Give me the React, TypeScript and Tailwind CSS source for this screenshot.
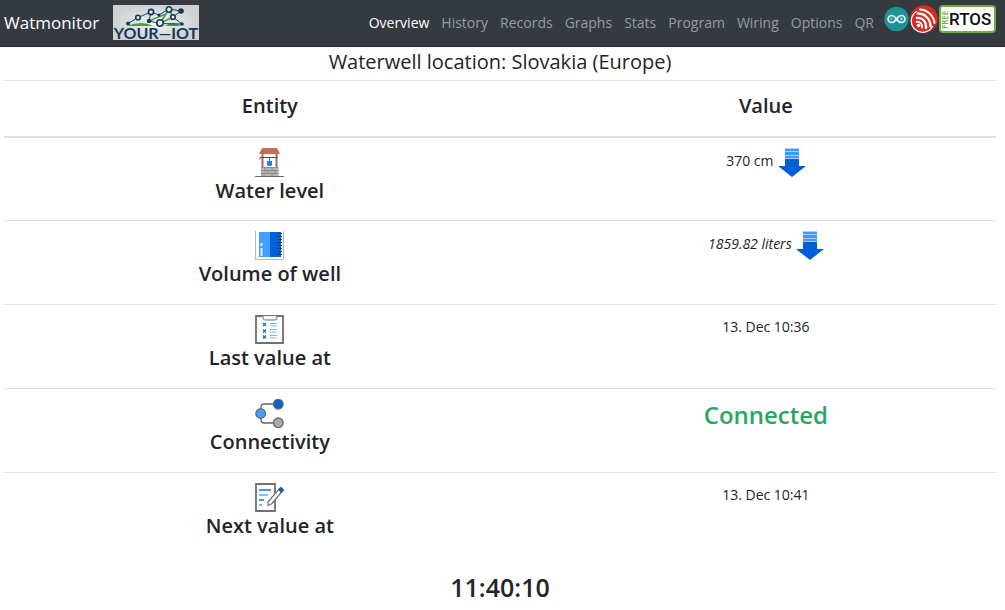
import type { ReactNode } from "react";

const links = ["Overview", "History", "Records", "Graphs", "Stats", "Program", "Wiring", "Options", "QR"];

function YourIotLogo() {
  return (
    <svg width="86" height="35" viewBox="0 0 86 35" className="block overflow-visible" role="img" aria-label="Your-IoT">
      <defs>
        <radialGradient id="plate">
          <stop offset="0" stopColor="#f4f4f4" />
          <stop offset="1" stopColor="#cfd0d2" />
        </radialGradient>
      </defs>
      <rect width="86" height="35" fill="url(#plate)" />
      <path d="M14 21 Q29 15 40 21Z M52 21 Q60 15 68 21Z" fill="#4f9b45" />
      <path d="M15 18.500 25 12.500 38 7 36 16 47 18.500 69 19 60 12 56 4 68 6 60 12 M38 7 46 10 56 4" fill="none" stroke="#174568" strokeWidth="1" />
      <path d="M36 16 53 9 56 4M47 18.500 60 12 56 4Z" fill="none" stroke="#4f9b45" strokeWidth="1.5" />
      <g fill="#12395c">
        <circle cx="15" cy="18.5" r="2" />
        <circle cx="36" cy="16" r="2.2" />
        <circle cx="46" cy="10" r="1.6" />
        <circle cx="68" cy="6" r="2.8" />
        <circle cx="69" cy="19" r="1.8" />
      </g>
      <g fill="#eef1f3" stroke="#12395c" strokeWidth="1.6">
        <circle cx="25" cy="12.5" r="2.3" />
        <circle cx="38" cy="7" r="2.6" />
        <circle cx="47" cy="18" r="3.2" />
        <circle cx="56" cy="4.5" r="2.7" />
        <circle cx="60" cy="12" r="2.3" />
      </g>
      <text x="43" y="34" textAnchor="middle" fontFamily="Lato, sans-serif" fontWeight="700" fontSize="16" fill="#12395c">YOUR—IOT</text>
    </svg>
  );
}

function ArduinoLogo() {
  return (
    <svg width="25" height="26" viewBox="0 0 25 26" className="block" role="img" aria-label="Arduino">
      <circle cx="12.5" cy="13" r="12.2" fill="#1b9298" />
      <path d="M12.5 13C10.8 10.4 9.5 9.5 7.6 9.5a3.5 3.5 0 0 0 0 7c1.9 0 3.2-.9 4.9-3.5 1.7-2.6 3-3.5 4.9-3.5a3.5 3.5 0 0 1 0 7c-1.9 0-3.2-.9-4.9-3.5Z" fill="none" stroke="#e9f7f7" strokeWidth="1.7" />
      <path d="M6.2 13h2.8M16 13h2.8M17.4 11.6v2.8" stroke="#e9f7f7" strokeWidth=".8" />
    </svg>
  );
}

function EspressifLogo() {
  return (
    <svg width="28" height="28" viewBox="0 0 28 28" className="block" role="img" aria-label="Espressif">
      <circle cx="14" cy="14" r="13.8" fill="#d32c20" />
      <g fill="none" stroke="#fff" strokeLinecap="round">
        <path d="M6.5 6.5A11.3 11.3 0 1 0 22.5 21.5" strokeWidth="1.2" />
        <path d="M10 4.5C17 4.5 24 11 24.5 18" strokeWidth="2" />
        <path d="M8 8.5C15 8.5 20.5 14 20.5 21.5" strokeWidth="2.3" />
        <path d="M7 13C13 12.5 16.5 17 16 23" strokeWidth="2.3" />
        <path d="M6.5 16.8C10 16.5 12.5 19 12 22.5" strokeWidth="1.8" />
      </g>
      <circle cx="8.5" cy="20.5" r="1.8" fill="#fff" />
    </svg>
  );
}

function RtosLogo() {
  return (
    <svg width="57" height="28" viewBox="0 0 57 28" className="block" role="img" aria-label="FreeRTOS">
      <rect x="1" y="1" width="55" height="26" rx="3" fill="#fff" stroke="#72ad46" strokeWidth="2" />
      <text transform="translate(9 24) rotate(-90)" fontFamily="Open Sans, sans-serif" fontWeight="600" fontSize="8" fill="#72ad46">FREE</text>
      <text x="10" y="20" fontFamily="Roboto, sans-serif" fontWeight="500" fontSize="17" fill="#111">RTOS</text>
    </svg>
  );
}

function DownArrow() {
  return (
    <svg width="28" height="29" viewBox="0 0 28 29" role="img" aria-label="Falling">
      <path d="M7 0h14v11H7z" fill="#a4d2ff" />
      <path d="M7 1h14v2H7zM7 4h14v3H7zM7 8h14v2H7z" fill="#3d9bff" />
      <path d="M7 11h14v7h7L14 29 0 18h7z" fill="#005fd8" />
    </svg>
  );
}

function Icon({ children }: { children: ReactNode }) {
  return (
    <svg width="29" height="29" viewBox="0 0 29 29" className="block" aria-hidden="true">
      {children}
    </svg>
  );
}

const wellIcon = (
  <Icon>
    <path d="M7.500 6v14M21.500 6v14" stroke="#b96550" strokeWidth="2" />
    <path d="M7 0h15l3 6H4z" fill="#c46d58" />
    <path d="M5 11.500V9.500h18M14.500 9.500V14" fill="none" stroke="#555" />
    <path d="M12 13h5v4l-1 1h-3l-1-1z" fill="#1684f5" />
    <path d="M6 19h17.500v9H6z" fill="#b5b5b5" />
    <path d="M6 19.500h17.500M6 22.500h17.500M6 25.500h17.500M10 20v3M17 20v3M13 23v3M20 23v3M9 26v2M17 26v2" stroke="#858585" strokeWidth=".8" />
    <path d="M0 28.500h29" stroke="#666" />
  </Icon>
);

const volumeIcon = (
  <Icon>
    <path d="M.5 0v28.500h28V0" fill="#fff" stroke="#b8b8b8" />
    <path d="M4 1h11v25H4z" fill="#3fa0ff" />
    <path d="M15 1h11v25H15z" fill="#0262da" />
    <path d="M23 2.500h4M21 5.500h6M23 8.500h4M21 11.500h6M23 14.500h4M21 17.500h6M23 20.500h4M21 23.500h6" stroke="#16426f" />
    <path d="M6.500 12v3M6.500 17v8" stroke="#e7f4ff" strokeWidth="2" />
  </Icon>
);

const checklistIcon = (
  <Icon>
    <path d="M1 1h27v27H1z" fill="#fff" stroke="#707070" strokeWidth="1.8" />
    <path d="M8 1v2q0 2 2 2h10q2 0 2-2V1" fill="#f5f5f5" stroke="#777" />
    <path d="m8 8 3 3m0-3-3 3m0 3.500 3 3m0-3-3 3M8 20.500l3 3m0-3-3 3" stroke="#176ddc" strokeWidth="1.3" />
    <path d="M15 8.500h7M15 11h7M15 14.500h7M15 17h7M15 20.500h7M15 23h7" stroke="#75baff" strokeWidth="1.2" />
  </Icon>
);

const networkIcon = (
  <Icon>
    <path d="M18 5H9q-3 0-3 3v13q0 3 3 3h9" fill="none" stroke="#666" strokeWidth="1.3" />
    <g stroke="#666" strokeWidth="1.3">
      <circle cx="5.7" cy="14.5" r="4.8" fill="#3fa0ff" />
      <circle cx="23.3" cy="5.2" r="4.8" fill="#0262da" />
      <circle cx="23.3" cy="23.8" r="4.8" fill="#aaa" />
    </g>
  </Icon>
);

const noteIcon = (
  <Icon>
    <path d="M1 1h19v27H1z" fill="#fff" stroke="#707070" strokeWidth="1.8" />
    <path d="M4 7h12" stroke="#176ddc" strokeWidth="1.5" />
    <path d="M4 12h9M4 22h3" stroke="#55a9ff" strokeWidth="1.5" />
    <path d="M4 17h5" stroke="#176ddc" strokeWidth="1.5" />
    <path d="m13 19 11-13 3 2.500-10 12-4 2z" fill="#fff" stroke="#707070" strokeWidth="1.2" />
    <path d="m23.500 6 2.500-2 3 3-3 3z" fill="#0262da" stroke="#555" strokeWidth=".7" />
  </Icon>
);

const rows: { label: string; icon: ReactNode; value: ReactNode }[] = [
  {
    label: "Water level",
    icon: wellIcon,
    value: <div className="flex items-start justify-center gap-1"><span className="leading-[26px]">370 cm</span><DownArrow /></div>,
  },
  {
    label: "Volume of well",
    icon: volumeIcon,
    value: <div className="flex items-start justify-center gap-1"><i className="leading-[26px]">1859.82 liters</i><DownArrow /></div>,
  },
  { label: "Last value at", icon: checklistIcon, value: <span className="block leading-6">13. Dec 10:36</span> },
  {
    label: "Connectivity",
    icon: networkIcon,
    value: <strong className="block text-2xl font-semibold text-[#28a762]">Connected</strong>,
  },
  { label: "Next value at", icon: noteIcon, value: <span className="block leading-6">13. Dec 10:41</span> },
];

export default function App() {
  return (
    <div className="bg-white font-['Open_Sans','Noto_Sans',sans-serif] text-sm text-[#212529]">
      <header className="flex h-[47px] items-center border-b border-[#23272b] bg-[#343a40] pr-[9px] pl-1">
        <a href="#home" className="text-[17px] text-white">Watmonitor</a>
        <a href="#your-iot" className="mb-0.5 ml-3.5"><YourIotLogo /></a>
        <nav className="ml-auto flex gap-3">
          {links.map((link) => (
            <a key={link} href={"#" + link.toLowerCase()} className={link === "Overview" ? "text-white" : "text-[#999c9f]"}>
              {link}
            </a>
          ))}
        </nav>
        <div className="mb-2 ml-2.5 flex items-center gap-px">
          <a href="#arduino"><ArduinoLogo /></a>
          <a href="#espressif"><EspressifLogo /></a>
          <a href="#freertos"><RtosLogo /></a>
        </div>
      </header>
      <main className="pr-[9px] pl-1 text-center">
        <h1 className="h-[33px] text-xl leading-[30px]">Waterwell location: Slovakia (Europe)</h1>
        <table className="w-full table-fixed border-collapse">
          <thead>
            <tr className="h-14 border-t border-b-2 border-[#dee2e6] text-xl">
              <th scope="col" className="w-[53.6%] pb-1 font-semibold">Entity</th>
              <th scope="col" className="pb-1 font-semibold">Value</th>
            </tr>
          </thead>
          <tbody>
            {rows.map((row) => (
              <tr key={row.label} className="h-[84px] border-b border-[#dee2e6] last:border-b-0">
                <th scope="row" className="pt-2.5 align-top text-xl leading-7 font-semibold">
                  <div className="flex flex-col items-center">
                    {row.icon}
                    <span>{row.label}</span>
                  </div>
                </th>
                <td className="pt-2.5 align-top">{row.value}</td>
              </tr>
            ))}
          </tbody>
        </table>
        <p className="pt-3 text-[25px] leading-9 font-semibold">11:40:10</p>
      </main>
    </div>
  );
}
